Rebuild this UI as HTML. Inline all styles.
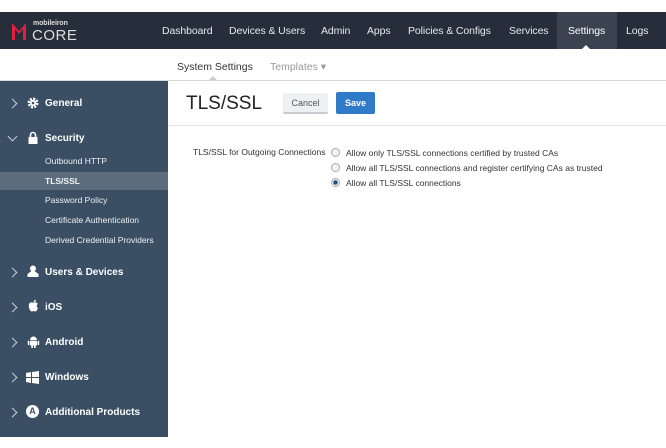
<!DOCTYPE html><html><head><style>
*{margin:0;padding:0;box-sizing:border-box}
body{width:666px;height:448px;background:#fff;font-family:"Liberation Sans",sans-serif;position:relative;overflow:hidden}
.nav{position:absolute;top:12px;left:0;width:666px;height:37px;background:#262d3b}
.nav span{position:absolute;top:13px;color:#e6e8ec;font-size:10.5px;letter-spacing:-0.1px}
.set{position:absolute;left:557px;top:0;width:60px;height:37px;background:#3b4250}
.sub{position:absolute;top:61px;font-size:10.5px}
.hl{position:absolute;top:80px;left:0;width:666px;height:1px;background:#d8d8d8}
.side{position:absolute;top:81px;left:0;width:168px;height:356px;background:#3a4f63}
.side div{position:absolute;color:#fff;font-size:10px;font-weight:bold}
.side .c{left:9px;width:7px;height:7px;border-right:1px solid #c8d0d8;border-top:1px solid #c8d0d8;transform:rotate(45deg)}
.side .d{transform:rotate(135deg)}
.side .s{left:45px;font-size:8.5px;font-weight:normal;color:#f0f2f4}
.sel{left:0!important;width:168px;height:18px;background:#5d6d7d}
.side svg{position:absolute}
.r{position:absolute;left:331px;width:9px;height:9px;border:1px solid #aaa;border-radius:50%;background:#f2f2f2}
.t{position:absolute;left:346px;font-size:8.5px;color:#333}
</style></head><body>
<div class="nav">
<svg style="position:absolute;left:11px;top:9px" width="16" height="20"><path d="M1 19V2l7 8 7-8v17h-3V8L8 13 4 8v11z" fill="#e1203f"/></svg>
<span style="left:33px;top:8px;font-size:7px;font-weight:bold;color:#ddd">mobileiron</span>
<span style="left:32px;top:15px;font-size:15px;font-weight:normal;color:#ddd;letter-spacing:0.5px">CORE</span>
<span style="left:162px">Dashboard</span><span style="left:229px">Devices &amp; Users</span><span style="left:321px">Admin</span><span style="left:367px">Apps</span><span style="left:408px">Policies &amp; Configs</span><span style="left:509px">Services</span>
<div class="set"></div><span style="left:568px;color:#fff">Settings</span><span style="left:626px">Logs</span>
<div style="position:absolute;left:582px;top:33px;border:4px solid transparent;border-bottom-color:#fff;border-top:0"></div>
</div>
<div class="sub" style="left:177px;color:#333">System Settings</div>
<div class="sub" style="left:270px;color:#999">Templates ▾</div>
<div style="position:absolute;left:209px;top:76px;border:4px solid transparent;border-bottom-color:#ccc;border-top:0"></div>
<div class="hl"></div>
<div class="side">
<div class="c" style="top:19px"></div>
<svg style="left:27px;top:16px" width="12" height="12" viewBox="0 0 12 12"><circle cx="6" cy="6" r="4.2" fill="none" stroke="#fff" stroke-width="2.5" stroke-dasharray="2 1.3"/><circle cx="6" cy="6" r="3.2" fill="#fff"/><circle cx="6" cy="6" r="1.3" fill="#3a4f63"/></svg>
<div style="left:45px;top:17px">General</div>
<div class="c d" style="top:52px"></div>
<svg style="left:28px;top:50px" width="10" height="13"><path d="M2.5 6V4a2.5 2.5 0 0 1 5 0v2" fill="none" stroke="#fff" stroke-width="1.6"/><rect x="0.5" y="6" width="9" height="7" fill="#fff"/></svg>
<div style="left:45px;top:52px">Security</div>
<div class="s" style="top:75px">Outbound HTTP</div>
<div class="sel" style="top:91px"></div><div class="s" style="top:95px;font-weight:bold">TLS/SSL</div>
<div class="s" style="top:114px">Password Policy</div>
<div class="s" style="top:134px">Certificate Authentication</div>
<div class="s" style="top:154px">Derived Credential Providers</div>
<div class="c" style="top:188px"></div>
<svg style="left:27px;top:184px" width="12" height="12"><circle cx="6" cy="3.5" r="3" fill="#fff"/><path d="M4.5 6h3l4 3v3H0.5V9z" fill="#fff"/></svg>
<div style="left:45px;top:186px">Users &amp; Devices</div>
<div class="c" style="top:223px"></div>
<svg style="left:28px;top:218px" width="11" height="13"><path d="M5.5 4C4 3 1 3 0.8 6.5 0.6 9.5 2.5 12.5 3.8 12.5c1 0 1-.5 1.7-.5s.8.5 1.7.5c1.2 0 2.2-2 2.8-3.5-1.5-.7-1.8-3-.2-4C9 3.3 7 3 5.5 4zM5.5 3.5C5.5 2 6.5 1 8 .8 8 2.3 7 3.4 5.5 3.5z" fill="#fff"/></svg>
<div style="left:45px;top:221px">iOS</div>
<div class="c" style="top:258px"></div>
<svg style="left:27px;top:254px" width="13" height="13"><path d="M3 5a3.5 3.5 0 0 1 7 0z" fill="#fff"/><rect x="3" y="5.6" width="7" height="5" rx="1" fill="#fff"/><rect x="0.8" y="5.6" width="1.6" height="4.5" rx=".8" fill="#fff"/><rect x="10.6" y="5.6" width="1.6" height="4.5" rx=".8" fill="#fff"/><rect x="4.3" y="10" width="1.6" height="3" fill="#fff"/><rect x="7.1" y="10" width="1.6" height="3" fill="#fff"/></svg>
<div style="left:45px;top:256px">Android</div>
<div class="c" style="top:293px"></div><svg style="left:26px;top:290px" width="13" height="13"><path d="M0 2l5-1v5H0zM6 1l7-1v6H6zM0 7h5v5l-5-1zM6 7h7v6l-7-1z" fill="#fff"/></svg><div style="left:45px;top:291px">Windows</div>
<div class="c" style="top:328px"></div><div style="left:26px;top:324px;width:13px;height:13px;border-radius:50%;background:#fff;color:#3a4f63;font-size:9px;text-align:center;line-height:13px">A</div><div style="left:45px;top:326px">Additional Products</div>
</div>
<div style="position:absolute;left:186px;top:93px;font-size:19px;color:#222">TLS/SSL</div>
<div style="position:absolute;left:283px;top:93px;width:45px;height:21px;background:#eef0f2;border-bottom:2px solid #c8ccd0;border-radius:2px;font-size:9px;color:#555;text-align:center;line-height:20px">Cancel</div>
<div style="position:absolute;left:336px;top:92px;width:39px;height:22px;background:#2f7bc8;border-radius:2px;font-size:9px;color:#fff;font-weight:bold;text-align:center;line-height:22px">Save</div>
<div style="position:absolute;left:168px;top:125px;width:498px;height:1px;background:#e2e2e2"></div>
<div style="position:absolute;left:193px;top:147px;font-size:8.5px;color:#333">TLS/SSL for Outgoing Connections</div>
<div class="r" style="top:148px"></div><div class="t" style="top:148px">Allow only TLS/SSL connections certified by trusted CAs</div>
<div class="r" style="top:163px"></div><div class="t" style="top:163px">Allow all TLS/SSL connections and register certifying CAs as trusted</div>
<div class="r" style="top:178px;background:radial-gradient(circle,#1f4f8a 2px,#f2f2f2 2.5px)"></div><div class="t" style="top:178px">Allow all TLS/SSL connections</div>
</body></html>
